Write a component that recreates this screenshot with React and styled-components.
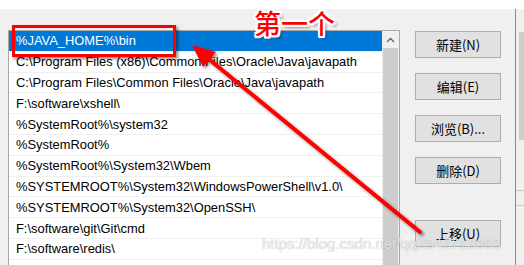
import React from 'react'
import styled, { createGlobalStyle } from 'styled-components'

const GlobalStyle = createGlobalStyle`
  html, body {
    margin: 0;
    padding: 0;
    background: #f0f0f0;
    overflow: hidden;
  }
  body {
    font-family: "Liberation Sans", "Noto Sans CJK SC", sans-serif;
  }
`

const paths = [
  '%JAVA_HOME%\\bin',
  'C:\\Program Files (x86)\\Common Files\\Oracle\\Java\\javapath',
  'C:\\Program Files\\Common Files\\Oracle\\Java\\javapath',
  'F:\\software\\xshell\\',
  '%SystemRoot%\\system32',
  '%SystemRoot%',
  '%SystemRoot%\\System32\\Wbem',
  '%SYSTEMROOT%\\System32\\WindowsPowerShell\\v1.0\\',
  '%SYSTEMROOT%\\System32\\OpenSSH\\',
  'F:\\software\\git\\Git\\cmd',
  'F:\\software\\redis\\',
]

const buttons = [
  { label: '新建(N)', gap: 0 },
  { label: '编辑(E)', gap: 15 },
  { label: '浏览(B)...', gap: 15 },
  { label: '删除(D)', gap: 15 },
  { label: '上移(U)', gap: 36 },
]

const Screen = styled.div`
  position: relative;
  width: 524px;
  height: 265px;
  overflow: hidden;
  display: flex;
  flex-direction: column;
`

const TitleStrip = styled.div`
  height: 9px;
  background: #ffffff;
  flex: none;
`

const Body = styled.div`
  flex: 1;
  display: flex;
  min-height: 0;
`

const Dialog = styled.div`
  width: 515px;
  display: flex;
  align-items: flex-start;
  padding: 21px 0 0 8px;
  box-sizing: border-box;
`

const ListBox = styled.div`
  width: 392px;
  height: 260px;
  border: 1px solid #a9a9a9;
  background: #ffffff;
  display: flex;
  box-sizing: border-box;
  flex: none;
`

const Rows = styled.div`
  flex: 1;
  display: flex;
  flex-direction: column;
`

const Row = styled.div`
  height: 20.8px;
  flex: none;
  box-sizing: border-box;
  border-bottom: 1px solid #f0f0f0;
  padding-left: 7px;
  display: flex;
  align-items: center;
  font-size: 12.9px;
  white-space: nowrap;
  overflow: hidden;
  color: ${({ $selected }) => ($selected ? '#ffffff' : '#000000')};
  background: ${({ $selected }) => ($selected ? '#0078d7' : 'transparent')};
`

const ScrollTrack = styled.div`
  width: 17px;
  flex: none;
  background: #f0f0f0;
  display: flex;
  flex-direction: column;
  align-items: center;
`

const ScrollArrow = styled.div`
  height: 17px;
  width: 100%;
  display: flex;
  align-items: center;
  justify-content: center;
`

const ScrollThumb = styled.div`
  flex: 1;
  width: 15px;
  background: #cdcdcd;
`

const ButtonColumn = styled.div`
  display: flex;
  flex-direction: column;
  margin-left: 15px;
  padding-top: 1px;
`

const Button = styled.button`
  width: 86px;
  height: 27px;
  margin-top: ${({ $gap }) => $gap}px;
  border: 1px solid #adadad;
  background: #e1e1e1;
  font-family: "Noto Sans CJK SC", "Liberation Sans", sans-serif;
  font-size: 13px;
  color: #000000;
  padding: 0;
  display: flex;
  align-items: center;
  justify-content: center;
`

const BackWindow = styled.div`
  flex: 1;
  border-left: 1px solid #8a8a8a;
  background: #f0f0f0;
  display: flex;
  flex-direction: column;
  align-items: flex-end;
`

const BackThumb = styled.div`
  width: 5px;
  height: 108px;
  margin-top: 23px;
  background: #cdcdcd;
`

const BackLine = styled.div`
  align-self: stretch;
  height: 1px;
  background: #c8c8c8;
  margin-top: ${({ $gap }) => $gap}px;
`

const Highlight = styled.div`
  position: absolute;
  left: 12px;
  top: 25px;
  width: 164px;
  height: 32px;
  box-sizing: border-box;
  border: 3px solid #ff0000;
  box-shadow: 2px 2px 3px rgba(0, 0, 0, 0.45);
`

const Callout = styled.div`
  position: absolute;
  left: 254px;
  top: 4px;
  font-family: "Noto Sans CJK SC", sans-serif;
  font-weight: 500;
  font-size: 27px;
  line-height: 38px;
  color: #ff0000;
  text-shadow:
    -2px 0 0 #fff, 2px 0 0 #fff, 0 -2px 0 #fff, 0 2px 0 #fff,
    -2px -2px 0 #fff, 2px 2px 0 #fff, -2px 2px 0 #fff, 2px -2px 0 #fff,
    3px 3px 3px rgba(0, 0, 0, 0.45);
`

const Overlay = styled.svg`
  position: absolute;
  left: 0;
  top: 0;
  pointer-events: none;
`

const Watermark = styled.div`
  position: absolute;
  left: 262px;
  top: 235px;
  font-family: "Liberation Sans", sans-serif;
  font-size: 15px;
  color: rgba(255, 255, 255, 0.75);
  text-shadow: 0 0 1px rgba(0, 0, 0, 0.35);
  pointer-events: none;
`

const Arrow = () => (
  <Overlay width="524" height="265" viewBox="0 0 524 265">
    <defs>
      <filter id="shadow" x="-10%" y="-10%" width="130%" height="130%">
        <feDropShadow dx="2" dy="2" stdDeviation="1.5" floodColor="#000" floodOpacity="0.45" />
      </filter>
    </defs>
    <g filter="url(#shadow)">
      <line x1="420" y1="232" x2="205" y2="56" stroke="#ff0000" strokeWidth="4" strokeLinecap="round" />
      <polygon points="192,45 203,67 216,52" fill="#ff0000" />
    </g>
  </Overlay>
)

const App = () => {
  return (
    <>
      <GlobalStyle />
      <Screen>
        <TitleStrip />
        <Body>
          <Dialog>
            <ListBox>
              <Rows>
                {paths.map((p, i) => (
                  <Row key={p} $selected={i === 0}>{p}</Row>
                ))}
              </Rows>
              <ScrollTrack>
                <ScrollArrow>
                  <svg width="9" height="6" viewBox="0 0 9 6">
                    <path d="M1 5 L4.5 1.5 L8 5" fill="none" stroke="#606060" strokeWidth="1.3" />
                  </svg>
                </ScrollArrow>
                <ScrollThumb />
              </ScrollTrack>
            </ListBox>
            <ButtonColumn>
              {buttons.map((b) => (
                <Button key={b.label} $gap={b.gap}>{b.label}</Button>
              ))}
            </ButtonColumn>
          </Dialog>
          <BackWindow>
            <BackThumb />
            <BackLine $gap={50} />
            <BackLine $gap={14} />
          </BackWindow>
        </Body>
        <Highlight />
        <Callout>第一个</Callout>
        <Arrow />
        <Watermark>https://blog.csdn.net/qq2542713668</Watermark>
      </Screen>
    </>
  )
}

export default App
